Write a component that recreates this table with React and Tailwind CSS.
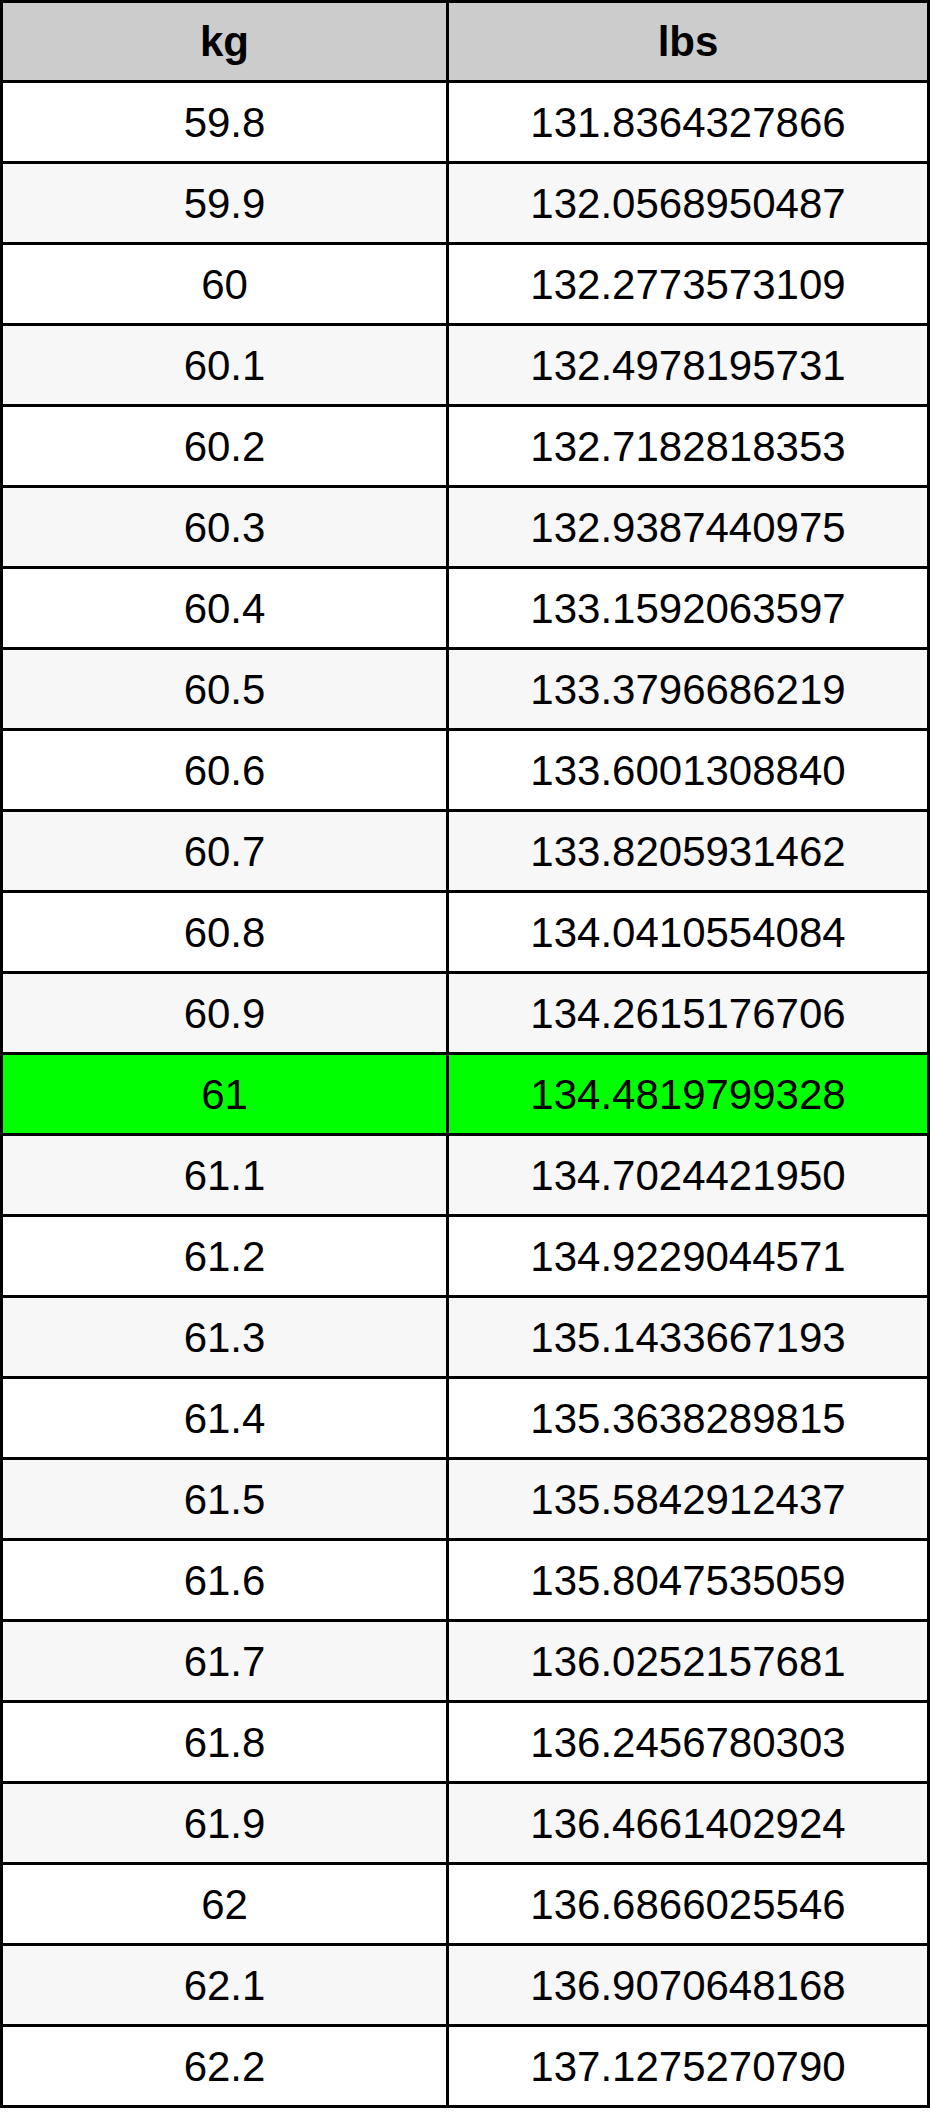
import React from "react";

const rows = [
    ["59.8", "131.8364327866"],
    ["59.9", "132.0568950487"],
    ["60", "132.2773573109"],
    ["60.1", "132.4978195731"],
    ["60.2", "132.7182818353"],
    ["60.3", "132.9387440975"],
    ["60.4", "133.1592063597"],
    ["60.5", "133.3796686219"],
    ["60.6", "133.6001308840"],
    ["60.7", "133.8205931462"],
    ["60.8", "134.0410554084"],
    ["60.9", "134.2615176706"],
    ["61", "134.4819799328"],
    ["61.1", "134.7024421950"],
    ["61.2", "134.9229044571"],
    ["61.3", "135.1433667193"],
    ["61.4", "135.3638289815"],
    ["61.5", "135.5842912437"],
    ["61.6", "135.8047535059"],
    ["61.7", "136.0252157681"],
    ["61.8", "136.2456780303"],
    ["61.9", "136.4661402924"],
    ["62", "136.6866025546"],
    ["62.1", "136.9070648168"],
    ["62.2", "137.1275270790"],
];

const App = () => {
    return (
        <div className="w-[930px] bg-white font-['Liberation_Sans',Arial,sans-serif] text-black">
            <div className="border-[3px] border-black">
                {/* heading */}
                <div className="flex h-[80px] bg-[#cccccc] text-[42px] font-bold border-b-[3px] border-black">
                    <div className="w-[446px] flex items-center justify-center border-r-[3px] border-black">
                        kg
                    </div>
                    <div className="flex-1 flex items-center justify-center">lbs</div>
                </div>

                {rows.map(([kg, lbs], index) => {
                    const highlight = kg === "61";
                    const last = index === rows.length - 1;
                    const bg = highlight
                        ? "bg-[#00ff00]"
                        : index % 2 === 1
                        ? "bg-[#f7f7f7]"
                        : "bg-white";
                    return (
                        <div
                            key={kg}
                            className={`flex text-[42px] ${bg} ${
                                last ? "h-[78px]" : "h-[81px] border-b-[3px] border-black"
                            }`}
                        >
                            <div className="w-[446px] flex items-center justify-center border-r-[3px] border-black">
                                {kg}
                            </div>
                            <div className="flex-1 flex items-center justify-center">{lbs}</div>
                        </div>
                    );
                })}
            </div>
        </div>
    );
};

export default App;
